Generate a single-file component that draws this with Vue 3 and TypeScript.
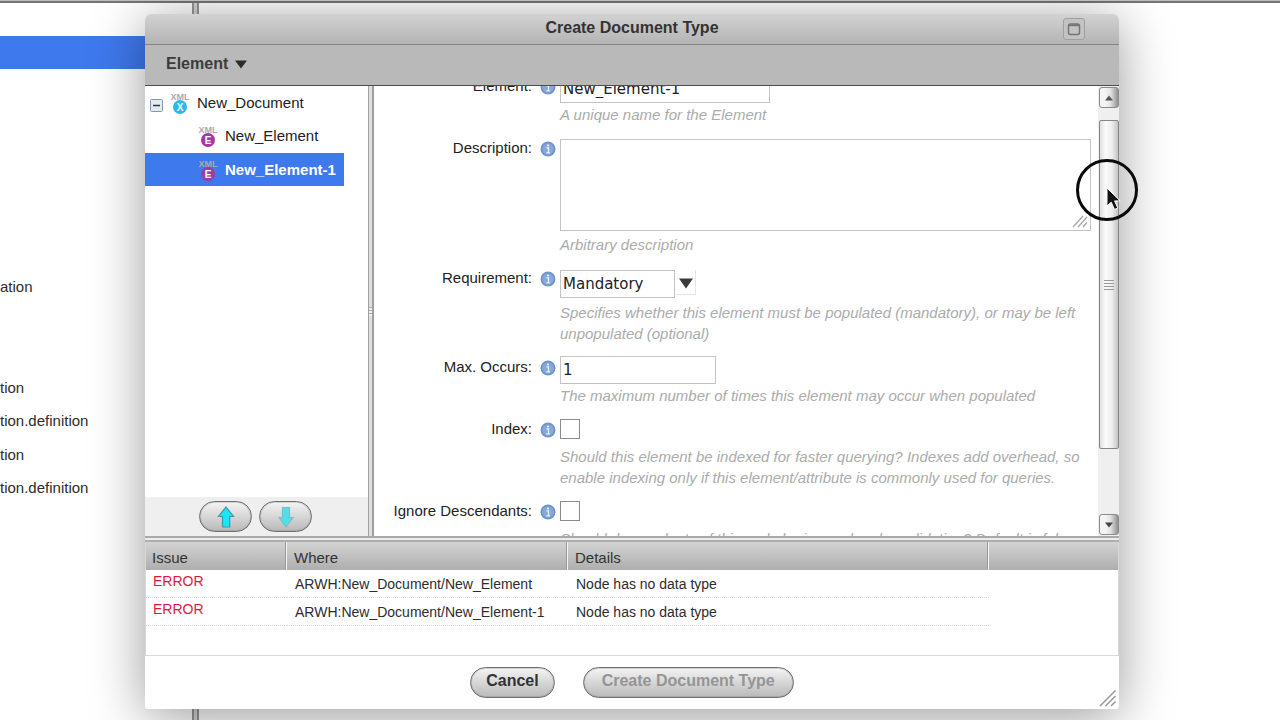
<script setup lang="ts">
import { onMounted, ref } from 'vue'

interface TreeNode {
  name: string
  kind: 'X' | 'E'
  selected: boolean
}

interface Field {
  id: string
  label: string
  type: 'text' | 'area' | 'select' | 'check'
  size?: 'wide' | 'short'
  value: string
  hint: string
}

interface Issue {
  severity: string
  where: string
  details: string
}

const background: string[] = [
  '', '', '', '', '', '', '', '', 'ation', '', '',
  'tion', 'tion.definition', 'tion', 'tion.definition',
]
const activeRow = 1

const nodes = ref<TreeNode[]>([
  { name: 'New_Document', kind: 'X', selected: false },
  { name: 'New_Element', kind: 'E', selected: false },
  { name: 'New_Element-1', kind: 'E', selected: true },
])

const fields = ref<Field[]>([
  { id: 'element', label: 'Element:', type: 'text', size: 'wide', value: 'New_Element-1', hint: 'A unique name for the Element' },
  { id: 'description', label: 'Description:', type: 'area', value: '', hint: 'Arbitrary description' },
  { id: 'requirement', label: 'Requirement:', type: 'select', value: 'Mandatory', hint: 'Specifies whether this element must be populated (mandatory), or may be left unpopulated (optional)' },
  { id: 'max-occurs', label: 'Max. Occurs:', type: 'text', size: 'short', value: '1', hint: 'The maximum number of times this element may occur when populated' },
  { id: 'index', label: 'Index:', type: 'check', value: '', hint: 'Should this element be indexed for faster querying? Indexes add overhead, so enable indexing only if this element/attribute is commonly used for queries.' },
  { id: 'ignore', label: 'Ignore Descendants:', type: 'check', value: '', hint: 'Should descendants of this node be ignored under validation? Default is false' },
])

const issues: Issue[] = [
  { severity: 'ERROR', where: 'ARWH:New_Document/New_Element', details: 'Node has no data type' },
  { severity: 'ERROR', where: 'ARWH:New_Document/New_Element-1', details: 'Node has no data type' },
]

const viewport = ref<HTMLElement | null>(null)
onMounted(() => {
  if (viewport.value) viewport.value.scrollTop = 24
})
</script>

<template>
  <div class="app">
    <aside class="sidebar">
      <ul class="side-list">
        <li v-for="(item, i) in background" :key="i" :class="{ active: i === activeRow }">{{ item }}</li>
      </ul>
    </aside>
    <div class="side-split"></div>

    <section class="dialog" role="dialog" aria-labelledby="dialog-title">
      <header class="titlebar">
        <h1 id="dialog-title">Create Document Type</h1>
        <button class="maximize" type="button" aria-label="Maximize">
          <svg width="14" height="14" viewBox="0 0 14 14">
            <rect x="1.5" y="2" width="11" height="10.5" rx="2" fill="none" stroke="#757575" stroke-width="1.5" />
            <path d="M2 3.3h10" stroke="#757575" stroke-width="1.8" />
          </svg>
        </button>
      </header>

      <nav class="menubar">
        <button class="menu" type="button">
          Element
          <svg width="12" height="9" viewBox="0 0 12 9"><path d="M0 .5h12L6 8.500z" fill="#2c2c2c" /></svg>
        </button>
      </nav>

      <div class="body">
        <div class="tree-pane">
          <ul class="tree">
            <li v-for="node in nodes" :key="node.name" :class="{ root: node.kind === 'X', selected: node.selected }">
              <button v-if="node.kind === 'X'" class="toggle" type="button" aria-label="Collapse">
                <svg width="13" height="13" viewBox="0 0 13 13">
                  <rect x=".5" y=".5" width="12" height="12" rx="1" fill="#e4ebf0" stroke="#8399ad" />
                  <path d="M3 6.500h7" stroke="#2f3942" stroke-width="1.500" />
                </svg>
              </button>
              <svg class="kind" width="22" height="22" viewBox="0 0 22 22" aria-hidden="true">
                <text class="kind-xml" x="11" y="8" text-anchor="middle">XML</text>
                <circle cx="11" cy="15" r="7" :fill="node.kind === 'X' ? '#2cb9ea' : '#a23aa0'" />
                <text class="kind-letter" x="11" y="19" text-anchor="middle">{{ node.kind }}</text>
              </svg>
              <span>{{ node.name }}</span>
            </li>
          </ul>
          <div class="tree-tools">
            <button class="pill arrow" type="button" aria-label="Move up">
              <svg width="18" height="22" viewBox="0 0 18 22">
                <path d="M9 1l7.500 9.500h-3.800V21H5.500V10.500H1.500z" fill="#19e6f7" stroke="#4a93ad" stroke-width="1.200" />
              </svg>
            </button>
            <button class="pill arrow" type="button" aria-label="Move down">
              <svg width="18" height="22" viewBox="0 0 18 22">
                <path d="M9 21l7-9.500h-3.500V1.500h-7v10H2z" fill="#4fdfe9" stroke="#7fbcc6" stroke-width="1.200" />
              </svg>
            </button>
          </div>
        </div>

        <div class="v-split"><i></i></div>

        <div ref="viewport" class="form-view">
          <form class="form" @submit.prevent>
            <div v-for="f in fields" :key="f.id" class="row" :class="'row-' + f.type">
              <label :for="f.id">{{ f.label }}</label>
              <svg class="info" width="16" height="16" viewBox="0 0 16 16" aria-hidden="true">
                <circle cx="8" cy="8" r="7.500" fill="#7194cd" />
                <circle cx="8" cy="8" r="5.600" fill="#86a8dc" />
                <path d="M6.500 6.800h2v4.700M6.300 11.800h3.600" fill="none" stroke="#f1f6ff" stroke-width="1.200" />
                <circle cx="8" cy="4.400" r="1" fill="#f1f6ff" />
              </svg>
              <div class="field">
                <input v-if="f.type === 'text'" :id="f.id" v-model="f.value" class="box" :class="f.size" type="text" />
                <div v-else-if="f.type === 'area'" class="area-wrap">
                  <textarea :id="f.id" v-model="f.value" class="box area"></textarea>
                  <svg class="area-grip" width="16" height="13" viewBox="0 0 16 13">
                    <path d="M1 12L11 1M6 12l9-10M11 12l4-4.500" stroke="#a9a9a9" stroke-width="1.300" />
                  </svg>
                </div>
                <div v-else-if="f.type === 'select'" class="select-wrap">
                  <select :id="f.id" v-model="f.value" class="box select">
                    <option>Mandatory</option>
                    <option>Optional</option>
                  </select>
                  <span class="drop">
                    <svg width="14" height="11" viewBox="0 0 14 11"><path d="M0 .5h14L7 10.500z" fill="#3b3b3b" /></svg>
                  </span>
                </div>
                <input v-else :id="f.id" class="check" type="checkbox" />
                <p class="hint">{{ f.hint }}</p>
              </div>
            </div>
          </form>
        </div>

        <div class="scrollbar">
          <button type="button" class="sb-btn" aria-label="Scroll up">
            <svg width="10" height="6" viewBox="0 0 10 6"><path d="M1 5.500h8L5 .5z" fill="#555" /></svg>
          </button>
          <div class="sb-track">
            <div class="sb-thumb"><i></i><i></i><i></i><i></i></div>
          </div>
          <button type="button" class="sb-btn" aria-label="Scroll down">
            <svg width="10" height="6" viewBox="0 0 10 6"><path d="M1 .5h8L5 5.500z" fill="#444" /></svg>
          </button>
        </div>
      </div>

      <div class="h-split"></div>

      <div class="issues">
        <table>
          <colgroup>
            <col class="c-issue" />
            <col class="c-where" />
            <col class="c-details" />
            <col />
          </colgroup>
          <thead>
            <tr>
              <th>Issue</th>
              <th>Where</th>
              <th>Details</th>
              <th></th>
            </tr>
          </thead>
          <tbody>
            <tr v-for="issue in issues" :key="issue.where">
              <td class="severity">{{ issue.severity }}</td>
              <td>{{ issue.where }}</td>
              <td>{{ issue.details }}</td>
              <td class="blank"></td>
            </tr>
          </tbody>
        </table>
      </div>

      <footer class="footer">
        <button class="pill action" type="button">Cancel</button>
        <button class="pill action create" type="button" disabled>Create Document Type</button>
      </footer>

      <svg class="resize" width="18" height="18" viewBox="0 0 18 18">
        <path d="M1 17L16.500 1.500M6.500 17l10-10M12 17l4.500-4.500" stroke="#999" stroke-width="1.500" />
      </svg>

      <svg class="pointer" width="64" height="64" viewBox="0 0 64 64">
        <circle cx="32" cy="32" r="29.500" fill="none" stroke="#0a0a0a" stroke-width="3" />
        <path d="M32 30v18l4.200-3.800 3.300 7.300 3.300-1.500-3.200-7.100h5.600z" fill="#111" stroke="#fff" stroke-width="1" />
      </svg>
    </section>
  </div>
</template>

<style>
body {
  overflow: hidden;
  background: #fff;
}
</style>

<style scoped>
* {
  box-sizing: border-box;
}

.app {
  position: relative;
  display: flex;
  height: 100vh;
  border-top: 1px solid #bdbdbd;
  box-shadow: inset 0 2px 0 #757575;
  font: 15px/20px "Liberation Sans", Arial, sans-serif;
  color: #2d2d2d;
  overflow: hidden;
}

button {
  font: inherit;
  color: inherit;
  padding: 0;
  border: 0;
  background: none;
}

ul {
  list-style: none;
  margin: 0;
  padding: 0;
}

.sidebar {
  width: 192px;
  margin-top: 2px;
}

.side-list li {
  height: 33px;
  line-height: 33px;
}

.side-list li:nth-child(odd) {
  height: 34px;
}

.side-list li:first-child {
  height: 33px;
}

.side-list li.active {
  background: #3f79ee;
}

.side-split {
  width: 7px;
  margin-top: 2px;
  background: #d5d5d5;
  border: solid #969696;
  border-width: 0 2px;
}

.dialog {
  position: absolute;
  inset: 13px 161px 11px 145px;
  display: flex;
  flex-direction: column;
  background: #fff;
  border-radius: 6px 6px 3px 3px;
  box-shadow: 0 8px 54px rgba(0, 0, 0, 0.4);
}

.titlebar {
  display: grid;
  grid-template-columns: 1fr auto 1fr;
  align-items: center;
  height: 31px;
  border-bottom: 1px solid #858585;
  border-radius: 6px 6px 0 0;
  background: linear-gradient(#d2d2d2, #b4b4b4);
}

.titlebar h1 {
  grid-column: 2;
  margin: 0;
  font-size: 16px;
  line-height: 20px;
  color: #333;
  padding-bottom: 2px;
}

.maximize {
  justify-self: end;
  display: grid;
  place-items: center;
  width: 22px;
  height: 22px;
  margin-right: 34px;
  border: 1px solid #a0a0a0;
  border-radius: 3px;
  background: #c3c3c3;
}

.menubar {
  display: flex;
  align-items: center;
  height: 41px;
  padding: 0 21px 2px;
  border-bottom: 1px solid #4d4d4d;
  background: #b9b9b9;
}

.menu {
  display: flex;
  align-items: center;
  gap: 7px;
  font-size: 16px;
  font-weight: bold;
  color: #3c3c3c;
}

.body {
  display: flex;
  flex: 1;
  min-height: 0;
}

.tree-pane {
  display: flex;
  flex-direction: column;
  width: 223px;
}

.tree {
  flex: 1;
}

.tree li {
  display: flex;
  align-items: center;
  height: 33px;
  width: 199px;
  padding-left: 52px;
}

.tree li:nth-child(2) {
  height: 34px;
}

.tree li.root {
  padding-left: 5px;
}

.tree li span {
  margin-left: 6px;
  color: #222;
}

.tree li.selected {
  background: #3f79ee;
}

.tree li.selected span {
  color: #fff;
  font-weight: bold;
}

.toggle {
  height: 13px;
  line-height: 0;
  margin: 6px 6px 0 0;
}

.kind-xml {
  font: bold 9px "Liberation Sans", Arial, sans-serif;
  fill: #a9a9ad;
}

.kind-letter {
  font: bold 10px "Liberation Sans", Arial, sans-serif;
  fill: #fff;
}

.tree-tools {
  display: flex;
  justify-content: center;
  align-items: center;
  gap: 7px;
  height: 39px;
  padding-right: 2px;
  background: #efefef;
}

.pill {
  border: 1px solid #6f6f6f;
  border-radius: 16px;
  background: linear-gradient(#f4f4f4, #b9b9b9);
  box-shadow: inset 0 0 0 1px rgba(110, 110, 110, 0.25);
}

.arrow {
  display: grid;
  place-items: center;
  width: 53px;
  height: 31px;
}

.v-split {
  display: flex;
  align-items: center;
  width: 6px;
  background: #dedede;
  border: solid #a0a0a0;
  border-width: 0 2px 0 1px;
}

.v-split i {
  width: 3px;
  height: 9px;
  background: repeating-linear-gradient(#a8a8a8 0 1px, #f0f0f0 1px 3px);
}

.form-view {
  flex: 1;
  min-width: 0;
  overflow: hidden;
}

.form {
  padding: 13px 7px 13px 0;
}

.row {
  display: grid;
  grid-template-columns: 158px 16px 1fr;
  column-gap: 8px;
  padding-bottom: 13px;
}

.row label {
  text-align: right;
  white-space: nowrap;
  color: #222;
}

.info {
  margin-top: 3px;
}

.row-text label {
  margin-top: 1px;
}

.row-text .info {
  margin-top: 4px;
}

.field {
  margin-left: -4px;
}

.box {
  display: block;
  height: 28px;
  margin: 0;
  padding: 0 2px;
  border: 1px solid #c4c4c4;
  border-radius: 0;
  outline: 0;
  background: #fff;
  color: #222;
  font: 15px/20px "DejaVu Sans", sans-serif;
}

.box.wide {
  width: 210px;
}

.box.short {
  width: 156px;
}

.hint {
  margin: 1px 0 0;
  font-style: italic;
  line-height: 21px;
  color: #ababab;
}

.area-wrap {
  position: relative;
  margin-top: 1px;
}

.box.area {
  width: 100%;
  height: 92px;
  resize: none;
}

.area-grip {
  position: absolute;
  right: 3px;
  bottom: 3px;
}

.row-area .hint {
  margin-top: 3px;
}

.select-wrap {
  display: flex;
  gap: 1px;
  margin-top: 2px;
}

.box.select {
  width: 115px;
  appearance: none;
}

.drop {
  display: grid;
  place-items: center;
  width: 20px;
  height: 25px;
  padding-top: 2px;
  border: solid #e6e6e6;
  border-width: 0 1px 1px 0;
}

.row-select {
  padding-bottom: 12px;
}

.row-select .hint {
  margin-top: 4px;
}

.check {
  display: block;
  appearance: none;
  width: 20px;
  height: 20px;
  margin: 0;
  border: 1px solid #8c8c8c;
  background: #fff;
}

.row-check .hint {
  margin-top: 7px;
}

.scrollbar {
  display: flex;
  flex-direction: column;
  width: 21px;
  padding: 1px 0 1px 1px;
  background: #efefef;
}

.sb-btn {
  display: grid;
  place-items: center;
  height: 21px;
  border: 1px solid #8b8b8b;
  border-radius: 3px;
  background: linear-gradient(90deg, #f4f4f4 30%, #e0e0e0 60%, #8f8f8f);
}

.sb-track {
  flex: 1;
  display: grid;
  grid-template-rows: 12fr 330fr 65fr;
}

.sb-thumb {
  grid-row: 2;
  display: flex;
  flex-direction: column;
  align-items: center;
  justify-content: center;
  gap: 2px;
  border: 1px solid #868686;
  border-radius: 2px;
  background: linear-gradient(90deg, #dedede, #fafafa 30%, #efefef 65%, #c4c4c4);
}

.sb-thumb i {
  width: 10px;
  height: 1px;
  background: #999;
}

.h-split {
  height: 6px;
  background: #ececec;
  border-top: 2px solid #a9a9a9;
  border-bottom: 2px solid #adadad;
}

.issues {
  height: 114px;
  border: solid #d8d8d8;
  border-width: 0 1px 1px;
}

table {
  width: 100%;
  border-collapse: separate;
  border-spacing: 0;
  table-layout: fixed;
}

.c-issue {
  width: 141px;
}

.c-where {
  width: 281px;
}

.c-details {
  width: 421px;
}

thead tr {
  background: linear-gradient(#d3d3d3, #aeaeae);
}

th {
  height: 28px;
  padding: 4px 7px 0;
  text-align: left;
  font-weight: normal;
  color: #333;
  border-right: 1px solid #f4f4f4;
  box-shadow: inset -1px 0 0 #999;
}

th:first-child {
  padding-left: 6px;
}

th:last-child {
  border-right: 0;
  box-shadow: none;
}

td {
  height: 28px;
  padding: 0 8px;
  font-size: 14px;
  line-height: 20px;
  border-bottom: 1px dotted #d8d8d8;
  white-space: nowrap;
}

td.severity {
  color: #e0193f;
  padding: 0 7px 5px;
}

td.blank {
  border-bottom: 0;
}

.footer {
  display: flex;
  justify-content: center;
  align-items: center;
  gap: 28px;
  height: 53px;
}

.action {
  height: 31px;
  padding: 0 15px 4px;
  font-size: 16px;
  font-weight: bold;
  color: #333;
}

.action.create {
  padding: 0 18px 4px;
}

.action:disabled {
  color: #959595;
}

.resize {
  position: absolute;
  right: 2px;
  bottom: 2px;
}

.pointer {
  position: absolute;
  top: 144px;
  right: -20px;
}
</style>
